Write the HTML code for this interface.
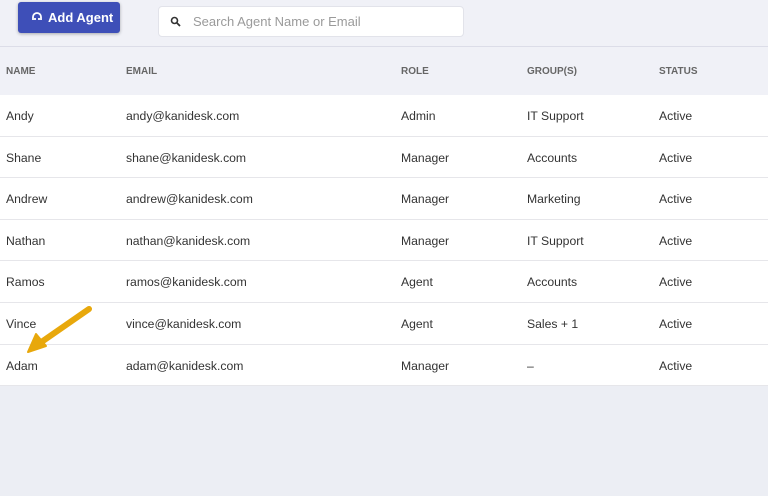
<!DOCTYPE html>
<html><head><style>
body{margin:0;width:768px;height:496px;background:#eceef4;font-family:"Liberation Sans",sans-serif;position:relative;overflow:hidden}
.top{position:absolute;left:0;top:0;width:768px;height:46px;background:#f0f1f7;border-bottom:1px solid #dcdde8}
.btn{position:absolute;left:18px;top:2px;width:102px;height:31px;background:#3e4fb8;border-radius:3px;color:#fff;font-weight:bold;font-size:13px;line-height:31px;box-shadow:0 1px 3px rgba(0,0,0,.3)}
.btn span{position:absolute;left:30px}
.search{position:absolute;left:158px;top:6px;width:304px;height:29px;background:#fff;border:1px solid #e2e3ea;border-radius:4px}
.search span{position:absolute;left:34px;top:7px;font-size:13px;color:#9a9a9a}
.hdr{position:absolute;left:0;top:47px;width:768px;height:48px;background:#f0f1f7}
.t{position:absolute;font-size:10px;color:#666;font-weight:bold;top:66px}
.rows{position:absolute;left:0;top:95px;width:768px;background:#fff}
.r{height:41.6px;border-bottom:1px solid #e6e6ea;position:relative;font-size:12.2px;color:#333;box-sizing:border-box}
.r div{position:absolute;top:14px}
</style></head><body>
<div class="top"><div class="btn"><svg style="position:absolute;left:13px;top:9px" width="12" height="12" viewBox="0 0 12 12"><path d="M2 9V6a4 4 0 0 1 8 0v3M4 9V7M8 9V7" stroke="#fff" stroke-width="1.8" fill="none"/></svg><span>Add Agent</span></div>
<div class="search"><svg style="position:absolute;left:11px;top:9px" width="11" height="11" viewBox="0 0 11 11"><circle cx="4.5" cy="4.5" r="3" stroke="#333" stroke-width="1.6" fill="none"/><path d="M7 7l3 3" stroke="#333" stroke-width="1.8"/></svg><span>Search Agent Name or Email</span></div></div>
<div class="hdr"></div>
<div class="t" style="left:6px">NAME</div><div class="t" style="left:126px">EMAIL</div><div class="t" style="left:401px">ROLE</div><div class="t" style="left:527px">GROUP(S)</div><div class="t" style="left:659px">STATUS</div>
<div class="rows">
<div class="r"><div style="left:6px">Andy</div><div style="left:126px">andy@kanidesk.com</div><div style="left:401px">Admin</div><div style="left:527px">IT Support</div><div style="left:659px">Active</div></div>
<div class="r"><div style="left:6px">Shane</div><div style="left:126px">shane@kanidesk.com</div><div style="left:401px">Manager</div><div style="left:527px">Accounts</div><div style="left:659px">Active</div></div>
<div class="r"><div style="left:6px">Andrew</div><div style="left:126px">andrew@kanidesk.com</div><div style="left:401px">Manager</div><div style="left:527px">Marketing</div><div style="left:659px">Active</div></div>
<div class="r"><div style="left:6px">Nathan</div><div style="left:126px">nathan@kanidesk.com</div><div style="left:401px">Manager</div><div style="left:527px">IT Support</div><div style="left:659px">Active</div></div>
<div class="r"><div style="left:6px">Ramos</div><div style="left:126px">ramos@kanidesk.com</div><div style="left:401px">Agent</div><div style="left:527px">Accounts</div><div style="left:659px">Active</div></div>
<div class="r"><div style="left:6px">Vince</div><div style="left:126px">vince@kanidesk.com</div><div style="left:401px">Agent</div><div style="left:527px">Sales + 1</div><div style="left:659px">Active</div></div>
<div class="r"><div style="left:6px">Adam</div><div style="left:126px">adam@kanidesk.com</div><div style="left:401px">Manager</div><div style="left:527px">–</div><div style="left:659px">Active</div></div>
</div>
<svg style="position:absolute;left:0;top:0" width="768" height="496"><path d="M89 309L40 343" stroke="#e8a80c" stroke-width="6" stroke-linecap="round"/><path d="M28 352L36 334L46 346Z" fill="#e8a80c" stroke="#e8a80c" stroke-width="2" stroke-linejoin="round"/></svg>
</body></html>
